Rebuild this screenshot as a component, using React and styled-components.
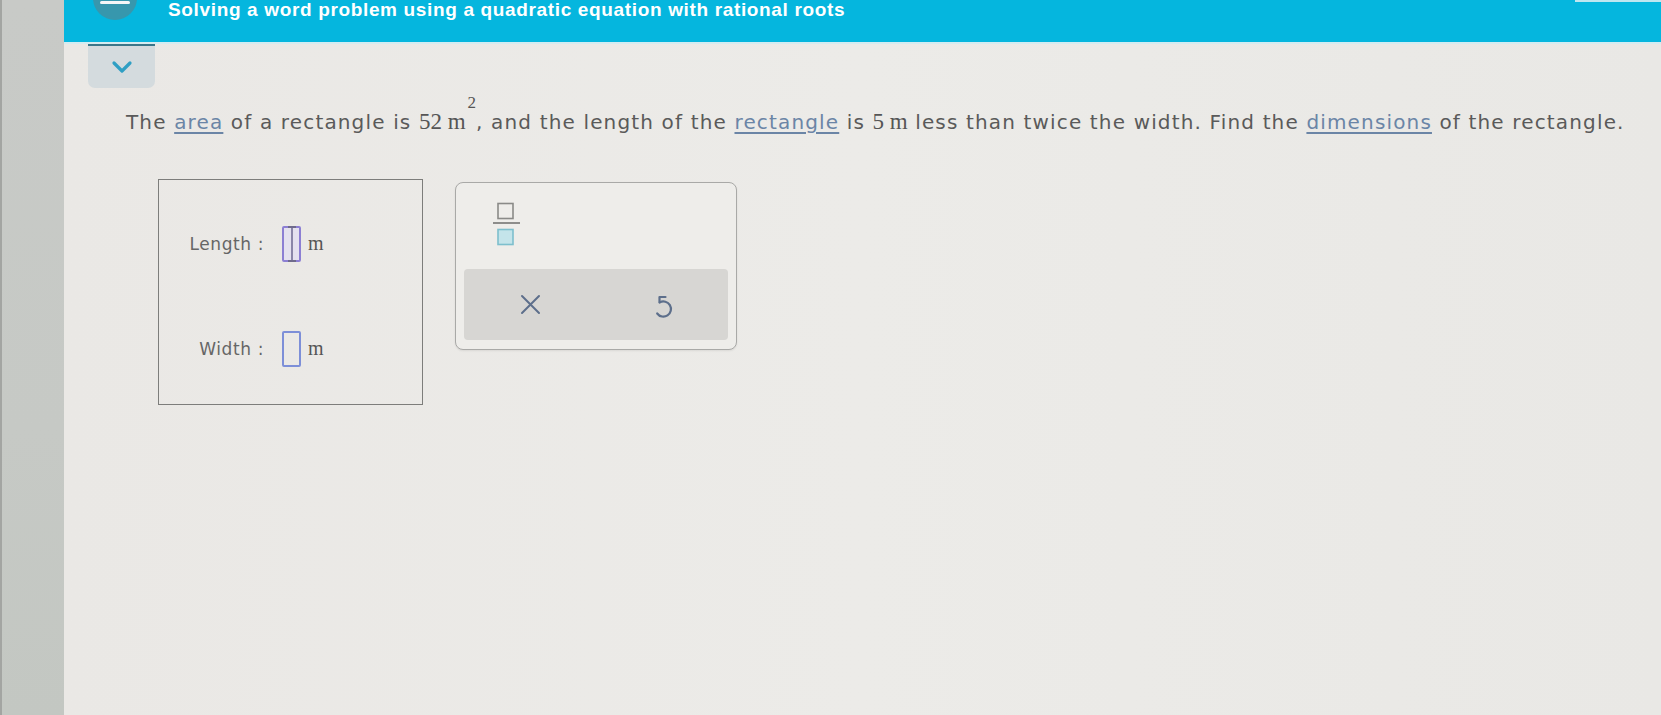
import React from "react";
import styled, { createGlobalStyle } from "styled-components";

const Global = createGlobalStyle`
  html, body { margin: 0; padding: 0; background: #ebeae7; }
  #root { width: 1661px; height: 715px; }
`;

const Screen = styled.div`
  display: flex;
  width: 1661px;
  height: 715px;
  overflow: hidden;
  font-family: "DejaVu Sans", Verdana, sans-serif;
`;

const Rail = styled.div`
  width: 62px;
  flex-shrink: 0;
  background: linear-gradient(180deg, #c8cac7 0%, #c6c9c5 60%, #c3c7c2 100%);
  border-left: 2px solid #a3a5a2;
`;

const Main = styled.main`
  flex: 1;
  display: flex;
  flex-direction: column;
  background: linear-gradient(90deg, #eae8e5 0%, #ecebe8 50%, #e9e8e5 100%);
`;

const Header = styled.header`
  height: 42px;
  flex-shrink: 0;
  background: #05b6de;
  border-bottom: 2px solid #d4ecf1;
  display: flex;
  align-items: flex-start;
  overflow: hidden;
`;

const MenuBadge = styled.div`
  width: 44px;
  height: 44px;
  margin: -24px 0 0 29px;
  border-radius: 50%;
  background: #3797ad;
  display: flex;
  align-items: flex-end;
  justify-content: center;
  padding-bottom: 16px;
  box-sizing: border-box;
  flex-shrink: 0;
`;

const Dash = styled.span`
  width: 30px;
  height: 3px;
  border-radius: 2px;
  background: #f4f7f8;
`;

const Title = styled.h1`
  margin: -1px 0 0 31px;
  font-family: "Liberation Sans", Arial, sans-serif;
  font-weight: 700;
  font-size: 19px;
  letter-spacing: 0.65px;
  line-height: 22px;
  color: #ffffff;
  white-space: nowrap;
`;

const TopMarks = styled.div`
  margin-left: auto;
  width: 86px;
  height: 2px;
  background: #bfe6f0;
`;

const Tab = styled.button`
  margin-left: 24px;
  width: 67px;
  height: 44px;
  border: none;
  border-top: 2px solid #3a7689;
  border-radius: 0 0 7px 7px;
  background: #d4dbde;
  display: flex;
  align-items: center;
  justify-content: center;
  padding: 0;
`;

const Question = styled.p`
  margin: 19px 0 0 62px;
  font-size: 20px;
  letter-spacing: 1.15px;
  line-height: 30px;
  color: #5a5a5a;
  white-space: nowrap;
`;

const Term = styled.span`
  color: #6b85a6;
  text-decoration: underline;
  text-underline-offset: 3px;
`;

const Math = styled.span`
  font-family: "Liberation Serif", "Times New Roman", serif;
  font-size: 23px;
  letter-spacing: 0;
  color: #555;
`;

const Sup = styled.sup`
  font-size: 17px;
  vertical-align: baseline;
  position: relative;
  top: -21px;
  line-height: 0;
  margin-left: 2px;
`;

const AnswerRow = styled.section`
  display: flex;
  align-items: flex-start;
  gap: 32px;
  margin: 42px 0 0 94px;
`;

const AnswerBox = styled.div`
  width: 265px;
  height: 226px;
  box-sizing: border-box;
  border: 1.5px solid #7d7d7b;
  display: grid;
  grid-template-columns: 105px 20px auto;
  grid-auto-rows: 37px;
  column-gap: 18px;
  row-gap: 68px;
  align-items: center;
  align-content: start;
  padding-top: 45px;
`;

const Label = styled.span`
  justify-self: end;
  font-size: 17px;
  letter-spacing: 0.6px;
  color: #666;
`;

const Slot = styled.span`
  position: relative;
  width: 19px;
  height: 36px;
  box-sizing: border-box;
  border: 2px solid ${(p) => (p.$active ? "#8c7fd3" : "#7d8fd8")};
  border-radius: 2px;
  background: ${(p) => (p.$active ? "#e4e1ef" : "transparent")};
  display: flex;
  justify-content: center;
`;

const Caret = styled.span`
  width: 2px;
  height: 100%;
  background: #8a86a8;
  position: relative;
  &::before,
  &::after {
    content: "";
    position: absolute;
    left: -3px;
    width: 8px;
    height: 2px;
    background: #6f6b8c;
  }
  &::before { top: -2px; }
  &::after { bottom: -2px; }
`;

const Unit = styled.span`
  margin-left: -12px;
  font-family: "Liberation Serif", "Times New Roman", serif;
  font-size: 20px;
  color: #555;
`;

const ToolPanel = styled.div`
  margin-top: 3px;
  width: 282px;
  height: 168px;
  box-sizing: border-box;
  border: 1.5px solid #a9a9a7;
  border-radius: 8px;
  background: #eeedea;
  box-shadow: 0 1px 2px rgba(0, 0, 0, 0.08);
  display: flex;
  flex-direction: column;
  padding: 19px 8px 9px 8px;
`;

const FractionKey = styled.button`
  margin-left: 29px;
  width: 28px;
  height: 45px;
  padding: 0;
  border: none;
  background: transparent;
  display: flex;
`;

const ActionBar = styled.div`
  margin-top: auto;
  height: 71px;
  border-radius: 4px;
  background: #d7d6d3;
  display: grid;
  grid-template-columns: 1fr 1fr;
  align-items: center;
  justify-items: center;
`;

const IconButton = styled.button`
  border: none;
  background: transparent;
  padding: 0;
  display: flex;
  margin-top: ${(p) => p.$drop || 0}px;
  margin-left: ${(p) => p.$shift || 0}px;
`;

export default function App() {
  return (
    <>
      <Global />
      <Screen>
        <Rail />
        <Main>
          <Header>
            <MenuBadge>
              <Dash />
            </MenuBadge>
            <Title>Solving a word problem using a quadratic equation with rational roots</Title>
            <TopMarks />
          </Header>
          <Tab aria-label="collapse">
            <svg width="22" height="14" viewBox="0 0 22 14">
              <path d="M3 3 L11 11 L19 3" fill="none" stroke="#2f9fc4" strokeWidth="3.2" strokeLinecap="round" strokeLinejoin="round" />
            </svg>
          </Tab>
          <Question>
            The <Term>area</Term> of a rectangle is <Math>52 m<Sup>2</Sup></Math>, and the length of the{" "}
            <Term>rectangle</Term> is <Math>5 m</Math> less than twice the width. Find the <Term>dimensions</Term> of the
            rectangle.
          </Question>
          <AnswerRow>
            <AnswerBox>
              <Label>Length :</Label>
              <Slot $active>
                <Caret />
              </Slot>
              <Unit>m</Unit>
              <Label>Width :</Label>
              <Slot />
              <Unit>m</Unit>
            </AnswerBox>
            <ToolPanel>
              <FractionKey aria-label="fraction">
                <svg width="28" height="45" viewBox="0 0 28 45">
                  <rect x="5" y="1.5" width="15" height="15" fill="none" stroke="#8a8a88" strokeWidth="1.6" />
                  <line x1="0" y1="21" x2="27" y2="21" stroke="#8d8d8b" strokeWidth="2" />
                  <rect x="5" y="27.5" width="15" height="15" fill="#c4e4ea" stroke="#7dbfcd" strokeWidth="1.6" />
                </svg>
              </FractionKey>
              <ActionBar>
                <IconButton aria-label="clear">
                  <svg width="21" height="21" viewBox="0 0 21 21">
                    <path d="M2 2 L19 19 M19 2 L2 19" stroke="#5d6f8b" strokeWidth="2" strokeLinecap="round" />
                  </svg>
                </IconButton>
                <IconButton aria-label="undo" $drop={4} $shift={3}>
                  <svg width="22" height="26" viewBox="0 0 22 26">
                    <path d="M12.5 3 H6.5 V8.5" fill="none" stroke="#5d6f8b" strokeWidth="2.2" strokeLinecap="round" strokeLinejoin="round" />
                    <path d="M6.8 8.3 A7.6 7.6 0 1 1 4.2 19.5" fill="none" stroke="#5d6f8b" strokeWidth="2.2" strokeLinecap="round" />
                  </svg>
                </IconButton>
              </ActionBar>
            </ToolPanel>
          </AnswerRow>
        </Main>
      </Screen>
    </>
  );
}
